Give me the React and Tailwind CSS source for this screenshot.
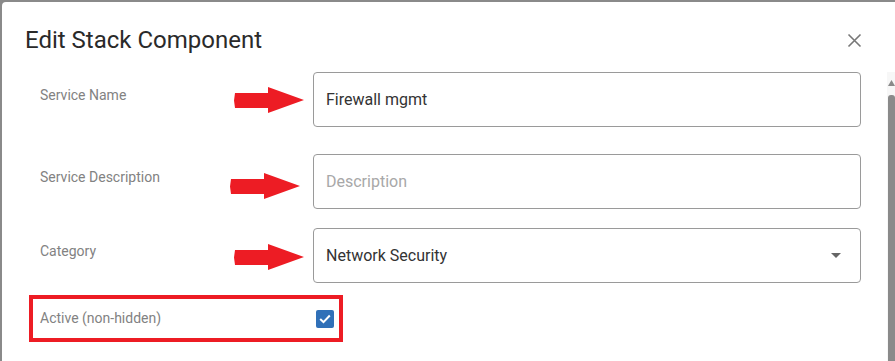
import { useState } from "react";

const font = { fontFamily: "Roboto, 'Liberation Sans', sans-serif" };

const Arrow = ({ className }) => (
  <svg
    className={`absolute ${className}`}
    width="70"
    height="26"
    viewBox="0 0 70 26"
  >
    <polygon
      points="1,6 34,6 34,0 70,13 34,26 34,21 1,21 0,13.5"
      fill="#ed1c24"
    />
  </svg>
);

const Field = ({ label, children, arrow, className = "" }) => (
  <div className={`relative flex pl-[38px] pr-[26px] ${className}`}>
    <div className="w-[273px] pt-[13px] text-[14px] leading-5 text-[#828282]">
      {label}
    </div>
    {children}
    {arrow}
  </div>
);

export default function App() {
  const [active, setActive] = useState(true);

  return (
    <div
      className="w-[895px] h-[361px] overflow-hidden bg-[#8a8a8a] pt-[2px] pl-[2px] flex"
      style={font}
    >
      <div className="flex-1 h-full bg-white rounded-tl-[4px] flex flex-col">
        {/* header */}
        <div className="h-[70px] flex items-start justify-between pl-[23px] pr-[33px] pt-[22px]">
          <h2 className="text-[24px] leading-8 text-[#2a2a2a]">
            Edit Stack Component
          </h2>
          <button className="mt-[9px] text-[#777]">
            <svg width="15" height="15" viewBox="0 0 15 15">
              <path
                d="M1.5 1.5 L13.5 13.5 M13.5 1.5 L1.5 13.5"
                stroke="currentColor"
                strokeWidth="1.6"
              />
            </svg>
          </button>
        </div>

        <div className="flex flex-1 min-h-0">
          {/* body */}
          <div className="flex-1 flex flex-col">
            <Field
              label="Service Name"
              arrow={<Arrow className="left-[232px] top-[15px]" />}
            >
              <div className="flex-1 h-[55px] border border-[#9a9a9a] rounded-[4px] flex items-center px-3 text-[16px] text-[#333]">
                Firewall mgmt
              </div>
            </Field>

            <Field
              label="Service Description"
              className="mt-[27px]"
              arrow={<Arrow className="left-[228px] top-[19px]" />}
            >
              <div className="flex-1 h-[55px] border border-[#9a9a9a] rounded-[4px] flex items-center px-3 text-[16px] text-[#a8a8a8]">
                Description
              </div>
            </Field>

            <Field
              label="Category"
              className="mt-[19px]"
              arrow={<Arrow className="left-[232px] top-[16px]" />}
            >
              <div className="flex-1 h-[55px] border border-[#9a9a9a] rounded-[4px] flex items-center justify-between pl-3 pr-[19px] text-[16px] text-[#333]">
                <span>Network Security</span>
                <svg width="10" height="5" viewBox="0 0 10 5">
                  <polygon points="0,0 10,0 5,5" fill="#666" />
                </svg>
              </div>
            </Field>

            <div className="ml-[27px] mt-[12px] w-[314px] h-[47px] border-4 border-[#ed1c24] flex items-center justify-between pl-[7px] pr-[5px]">
              <span className="text-[14px] text-[#828282]">Active (non-hidden)</span>
              <button
                onClick={() => setActive(!active)}
                className="w-[18px] h-[18px] rounded-[2px] bg-[#3070b8] flex items-center justify-center"
              >
                {active && (
                  <svg width="12" height="10" viewBox="0 0 12 10">
                    <path
                      d="M1.2 5 L4.5 8.2 L10.8 1.5"
                      stroke="white"
                      strokeWidth="2"
                      fill="none"
                    />
                  </svg>
                )}
              </button>
            </div>
          </div>

          {/* scrollbar */}
          <div className="w-[8px] bg-[#f7f7f7] flex flex-col items-center pt-[8px]">
            <svg width="7" height="6" viewBox="0 0 7 6">
              <polygon points="0,6 7,6 3.5,0" fill="#8a8a8a" />
            </svg>
            <div className="mt-[9px] w-[7px] flex-1 bg-[#8a8a8a] rounded-t-[3px] ml-[1px]" />
          </div>
        </div>
      </div>
    </div>
  );
}
